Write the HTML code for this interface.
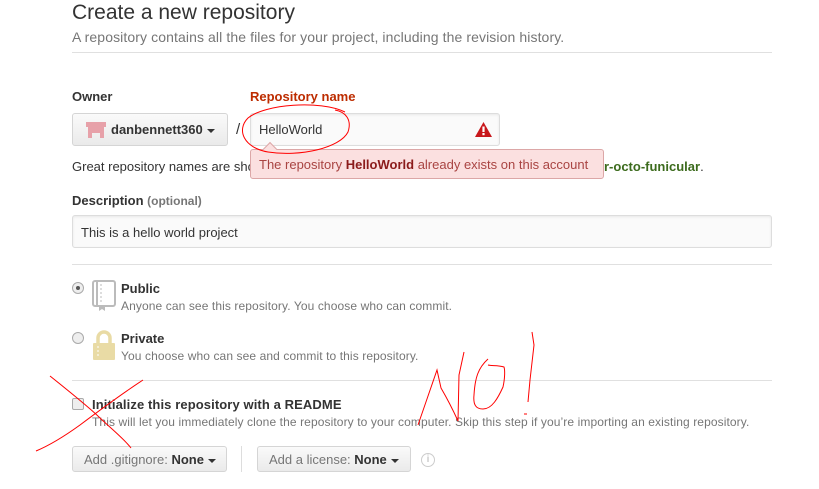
<!DOCTYPE html>
<html><head><meta charset="utf-8"><style>
*{margin:0;padding:0;box-sizing:border-box}
body{width:819px;height:489px;background:#fff;font-family:"Liberation Sans",Arial,sans-serif;color:#333;position:relative;overflow:hidden;font-size:13px}
.a{position:absolute;white-space:nowrap}
.hr{position:absolute;left:72px;width:700px;height:1px;background:#e0e0e0}
.b{font-weight:bold}
.btn{position:absolute;border:1px solid #d5d5d5;border-radius:3px;background:linear-gradient(#fafafa,#eaeaea)}
.car{display:inline-block;width:0;height:0;border-left:4px solid transparent;border-right:4px solid transparent;border-top:4px solid #333;vertical-align:middle;margin-left:4px}
.inp{position:absolute;border:1px solid #ddd;border-radius:3px;background:#fafafa;box-shadow:inset 0 1px 2px rgba(0,0,0,.075)}
.g{color:#767676;font-size:12px;letter-spacing:0.1px}
</style></head><body>
<div class="a" style="left:72px;top:1px;font-size:21px;color:#333">Create a new repository</div>
<div class="a" style="left:72px;top:29px;font-size:14px;letter-spacing:0.1px;color:#767676">A repository contains all the files for your project, including the revision history.</div>
<div class="hr" style="top:52px"></div>

<div class="a b" style="left:72px;top:89px">Owner</div>
<div class="a b" style="left:250px;top:89px;color:#bd2c00">Repository name</div>
<div class="btn" style="left:72px;top:113px;width:156px;height:33px">
 <div class="a" style="left:13px;top:8px;width:20px;height:17px">
  <div style="position:absolute;left:0;top:0;width:20px;height:5px;background:#e7a1a9"></div>
  <div style="position:absolute;left:2px;top:5px;width:16px;height:6px;background:#e7a1a9"></div>
  <div style="position:absolute;left:2px;top:11px;width:4px;height:5px;background:#e7a1a9"></div>
  <div style="position:absolute;left:14px;top:11px;width:4px;height:5px;background:#e7a1a9"></div>
 </div>
 <div class="a b" style="left:38px;top:8px">danbennett360<span class="car"></span></div>
</div>
<div class="a" style="left:236px;top:121px;font-size:15px;color:#333">/</div>
<div class="inp" style="left:250px;top:113px;width:250px;height:33px">
 <div class="a" style="left:8px;top:8px">HelloWorld</div>
 <svg class="a" style="left:224px;top:8px" width="17" height="15" viewBox="0 0 17 15"><path d="M8.5 0 L17 15 H0 Z" fill="#c8171b"/><rect x="7.4" y="4.5" width="2.2" height="5.5" fill="#fff"/><rect x="7.4" y="11" width="2.2" height="2.2" fill="#fff"/></svg>
</div>
<div class="a" style="left:72px;top:159px;font-size:13px;color:#333">Great repository names are sho</div>
<div class="a b" style="left:604px;top:159px;color:#3c6b1d">r-octo-funicular<span style="color:#333;font-weight:normal">.</span></div>
<div class="a" style="left:250px;top:149px;width:354px;height:30px;background:#fbe0e0;border:1px solid #dca7a7;border-radius:3px;color:#a94442;font-size:13px;padding:7px 0 0 8px">The repository <b style="color:#8b1b1b">HelloWorld</b> already exists on this account</div>
<div class="a" style="left:265px;top:144px;width:10px;height:10px;background:#fbe0e0;border-left:1px solid #dca7a7;border-top:1px solid #dca7a7;transform:rotate(45deg)"></div>

<div class="a b" style="left:72px;top:193px">Description <span style="color:#767676;font-size:12px">(optional)</span></div>
<div class="inp" style="left:72px;top:215px;width:700px;height:33px"><div class="a" style="left:8px;top:9px">This is a hello world project</div></div>
<div class="hr" style="top:264px"></div>

<div class="a" style="left:72px;top:282px;width:12px;height:12px;border-radius:50%;border:1px solid #aaa;background:#eee"><div style="position:absolute;left:3px;top:3px;width:4px;height:4px;border-radius:50%;background:#555"></div></div>
<svg class="a" style="left:92px;top:280px" width="24" height="31" viewBox="0 0 24 31"><rect x="1" y="1" width="22" height="25" rx="2" fill="#fff" stroke="#bbb" stroke-width="2"/><rect x="4" y="1" width="2" height="25" fill="#bbb"/><path d="M9 4v18" stroke="#bbb" stroke-dasharray="2 2"/><path d="M7 26h6v5l-3-2-3 2z" fill="#bbb"/></svg>
<div class="a b" style="left:121px;top:281px">Public</div>
<div class="a g" style="left:121px;top:299px">Anyone can see this repository. You choose who can commit.</div>

<div class="a" style="left:72px;top:332px;width:12px;height:12px;border-radius:50%;border:1px solid #aaa;background:#eee"></div>
<svg class="a" style="left:92px;top:330px" width="24" height="31" viewBox="0 0 24 31"><path d="M6 13V8a6 6 0 0 1 12 0v5" fill="none" stroke="#e9dba5" stroke-width="3.5"/><rect x="1" y="13" width="22" height="17" rx="1" fill="#e9dba5"/><path d="M6 16v12" stroke="#fff" stroke-dasharray="2 2"/></svg>
<div class="a b" style="left:121px;top:331px">Private</div>
<div class="a g" style="left:121px;top:349px">You choose who can see and commit to this repository.</div>
<div class="hr" style="top:380px"></div>

<div class="a" style="left:72px;top:398px;width:12px;height:12px;border:1px solid #aaa;border-radius:2px;background:#eee"></div>
<div class="a b" style="left:92px;top:397px;letter-spacing:0.1px">Initialize this repository with a README</div>
<div class="a g" style="left:92px;top:415px">This will let you immediately clone the repository to your computer. Skip this step if you’re importing an existing repository.</div>

<div class="btn" style="left:72px;top:446px;width:155px;height:26px"><div class="a" style="left:11px;top:5px;color:#767676">Add .gitignore: <b style="color:#333">None</b><span class="car"></span></div></div>
<div class="a" style="left:241px;top:446px;width:1px;height:26px;background:#ddd"></div>
<div class="btn" style="left:257px;top:446px;width:154px;height:26px"><div class="a" style="left:11px;top:5px;color:#767676">Add a license: <b style="color:#333">None</b><span class="car"></span></div></div>
<div class="a" style="left:421px;top:453px;width:14px;height:14px;border:1.5px solid #ccc;border-radius:50%;color:#ccc;font-size:10px;font-weight:bold;text-align:center;line-height:11px">i</div>

<svg class="a" style="left:0;top:0" width="819" height="489" viewBox="0 0 819 489" fill="none" stroke="#f00" stroke-width="1">
<path d="M345 112 C320 100 265 104 248 118 C236 130 244 148 268 152 C300 157 340 148 348 132 C352 120 346 112 335 110"/>
<path d="M50 376 C70 392 90 408 100 418 C115 432 125 440 131 448"/>
<path d="M143 380 C120 395 100 410 80 425 C62 438 48 446 36 451"/>
<path d="M418 425 C425 405 430 390 437 370 L441 388 C448 400 453 410 458 421 L459 375 L464 352"/>
<path d="M488 359 C478 368 475 378 474 395 C473 405 476 409 483 409 C492 409 498 398 503 387 C505 378 505 370 504 367 C498 365 492 366 488 365"/>
<path d="M532 332 L534 345 L530 380 L528 402"/>
<path d="M524 414 L527 414"/>
</svg>
</body></html>
